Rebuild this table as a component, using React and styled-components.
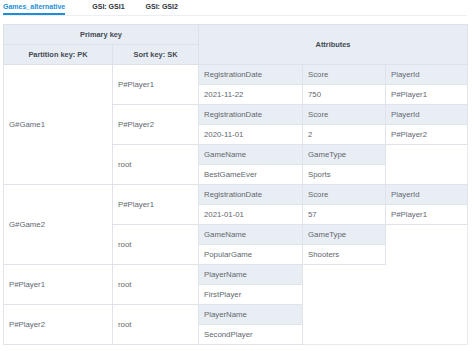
import React from "react";
import styled, { createGlobalStyle } from "styled-components";

const GlobalStyle = createGlobalStyle`
  body {
    margin: 0;
    background: #fff;
    font-family: "Liberation Sans", Arial, sans-serif;
  }
`;

const Page = styled.div`
  padding: 0 7px 0 3px;
`;

const TabBar = styled.div`
  display: flex;
  height: 15px;
  border-bottom: 1px solid #eceef1;
`;

const Tab = styled.div`
  display: flex;
  align-items: center;
  margin-right: ${({ $gap }) => $gap}px;
  font-size: 7px;
  font-weight: 700;
  color: ${({ $active }) => ($active ? "#1d8fd8" : "#2c3038")};
  border-bottom: 2px solid ${({ $active }) => ($active ? "#1d8fd8" : "transparent")};
`;

const Table = styled.table`
  margin-top: 8px;
  width: 464px;
  table-layout: fixed;
  border-collapse: collapse;
  border: 1px solid #e8eaee;
`;

const Row = styled.tr`
  height: 20px;
`;

const Head = styled.th`
  padding: 0;
  background: #e8edf3;
  border: 1px solid #dde2e8;
  font-size: 7.4px;
  font-weight: 700;
  color: #434a54;
  text-align: center;
`;

const KeyCell = styled.td`
  padding: 0 5px;
  border: 1px solid #e0e4ea;
  font-size: 7.8px;
  color: #62676e;
  vertical-align: middle;
  white-space: nowrap;
`;

const AttrCell = styled.td`
  padding: 0 5px;
  border: 1px solid #e0e4ea;
  background: ${({ $name }) => ($name ? "#e9eef4" : "#fff")};
  font-size: 7.8px;
  color: #62676e;
  white-space: nowrap;
`;

const EmptyCell = styled.td`
  padding: 0;
  border: none;
`;

const items = [
  {
    pk: "G#Game1",
    entries: [
      { sk: "P#Player1", names: ["RegistrationDate", "Score", "PlayerId"], values: ["2021-11-22", "750", "P#Player1"] },
      { sk: "P#Player2", names: ["RegistrationDate", "Score", "PlayerId"], values: ["2020-11-01", "2", "P#Player2"] },
      { sk: "root", names: ["GameName", "GameType"], values: ["BestGameEver", "Sports"] },
    ],
  },
  {
    pk: "G#Game2",
    entries: [
      { sk: "P#Player1", names: ["RegistrationDate", "Score", "PlayerId"], values: ["2021-01-01", "57", "P#Player1"] },
      { sk: "root", names: ["GameName", "GameType"], values: ["PopularGame", "Shooters"] },
    ],
  },
  {
    pk: "P#Player1",
    entries: [{ sk: "root", names: ["PlayerName"], values: ["FirstPlayer"] }],
  },
  {
    pk: "P#Player2",
    entries: [{ sk: "root", names: ["PlayerName"], values: ["SecondPlayer"] }],
  },
];

// Each item row has up to three attribute columns; unused ones stay blank.
function attrCells(list, isName) {
  const cells = [];
  for (let i = 0; i < 3; i++) {
    cells.push(
      i < list.length ? (
        <AttrCell key={i} $name={isName}>{list[i]}</AttrCell>
      ) : (
        <EmptyCell key={i} />
      )
    );
  }
  return cells;
}

export default function App() {
  return (
    <Page>
      <GlobalStyle />
      <TabBar>
        <Tab $active $gap={27}>Games_alternative</Tab>
        <Tab $gap={21}>GSI: GSI1</Tab>
        <Tab $gap={0}>GSI: GSI2</Tab>
      </TabBar>

      <Table>
        <colgroup>
          <col style={{ width: 109 }} />
          <col style={{ width: 86 }} />
          <col style={{ width: 104 }} />
          <col style={{ width: 83 }} />
          <col style={{ width: 82 }} />
        </colgroup>
        <thead>
          <Row>
            <Head colSpan={2}>Primary key</Head>
            <Head colSpan={3} rowSpan={2}>Attributes</Head>
          </Row>
          <Row>
            <Head>Partition key: PK</Head>
            <Head>Sort key: SK</Head>
          </Row>
        </thead>
        <tbody>
          {items.map((item) =>
            item.entries.map((entry, i) => (
              <React.Fragment key={item.pk + entry.sk}>
                <Row>
                  {i === 0 && <KeyCell rowSpan={item.entries.length * 2}>{item.pk}</KeyCell>}
                  <KeyCell rowSpan={2}>{entry.sk}</KeyCell>
                  {attrCells(entry.names, true)}
                </Row>
                <Row>{attrCells(entry.values, false)}</Row>
              </React.Fragment>
            ))
          )}
        </tbody>
      </Table>
    </Page>
  );
}
